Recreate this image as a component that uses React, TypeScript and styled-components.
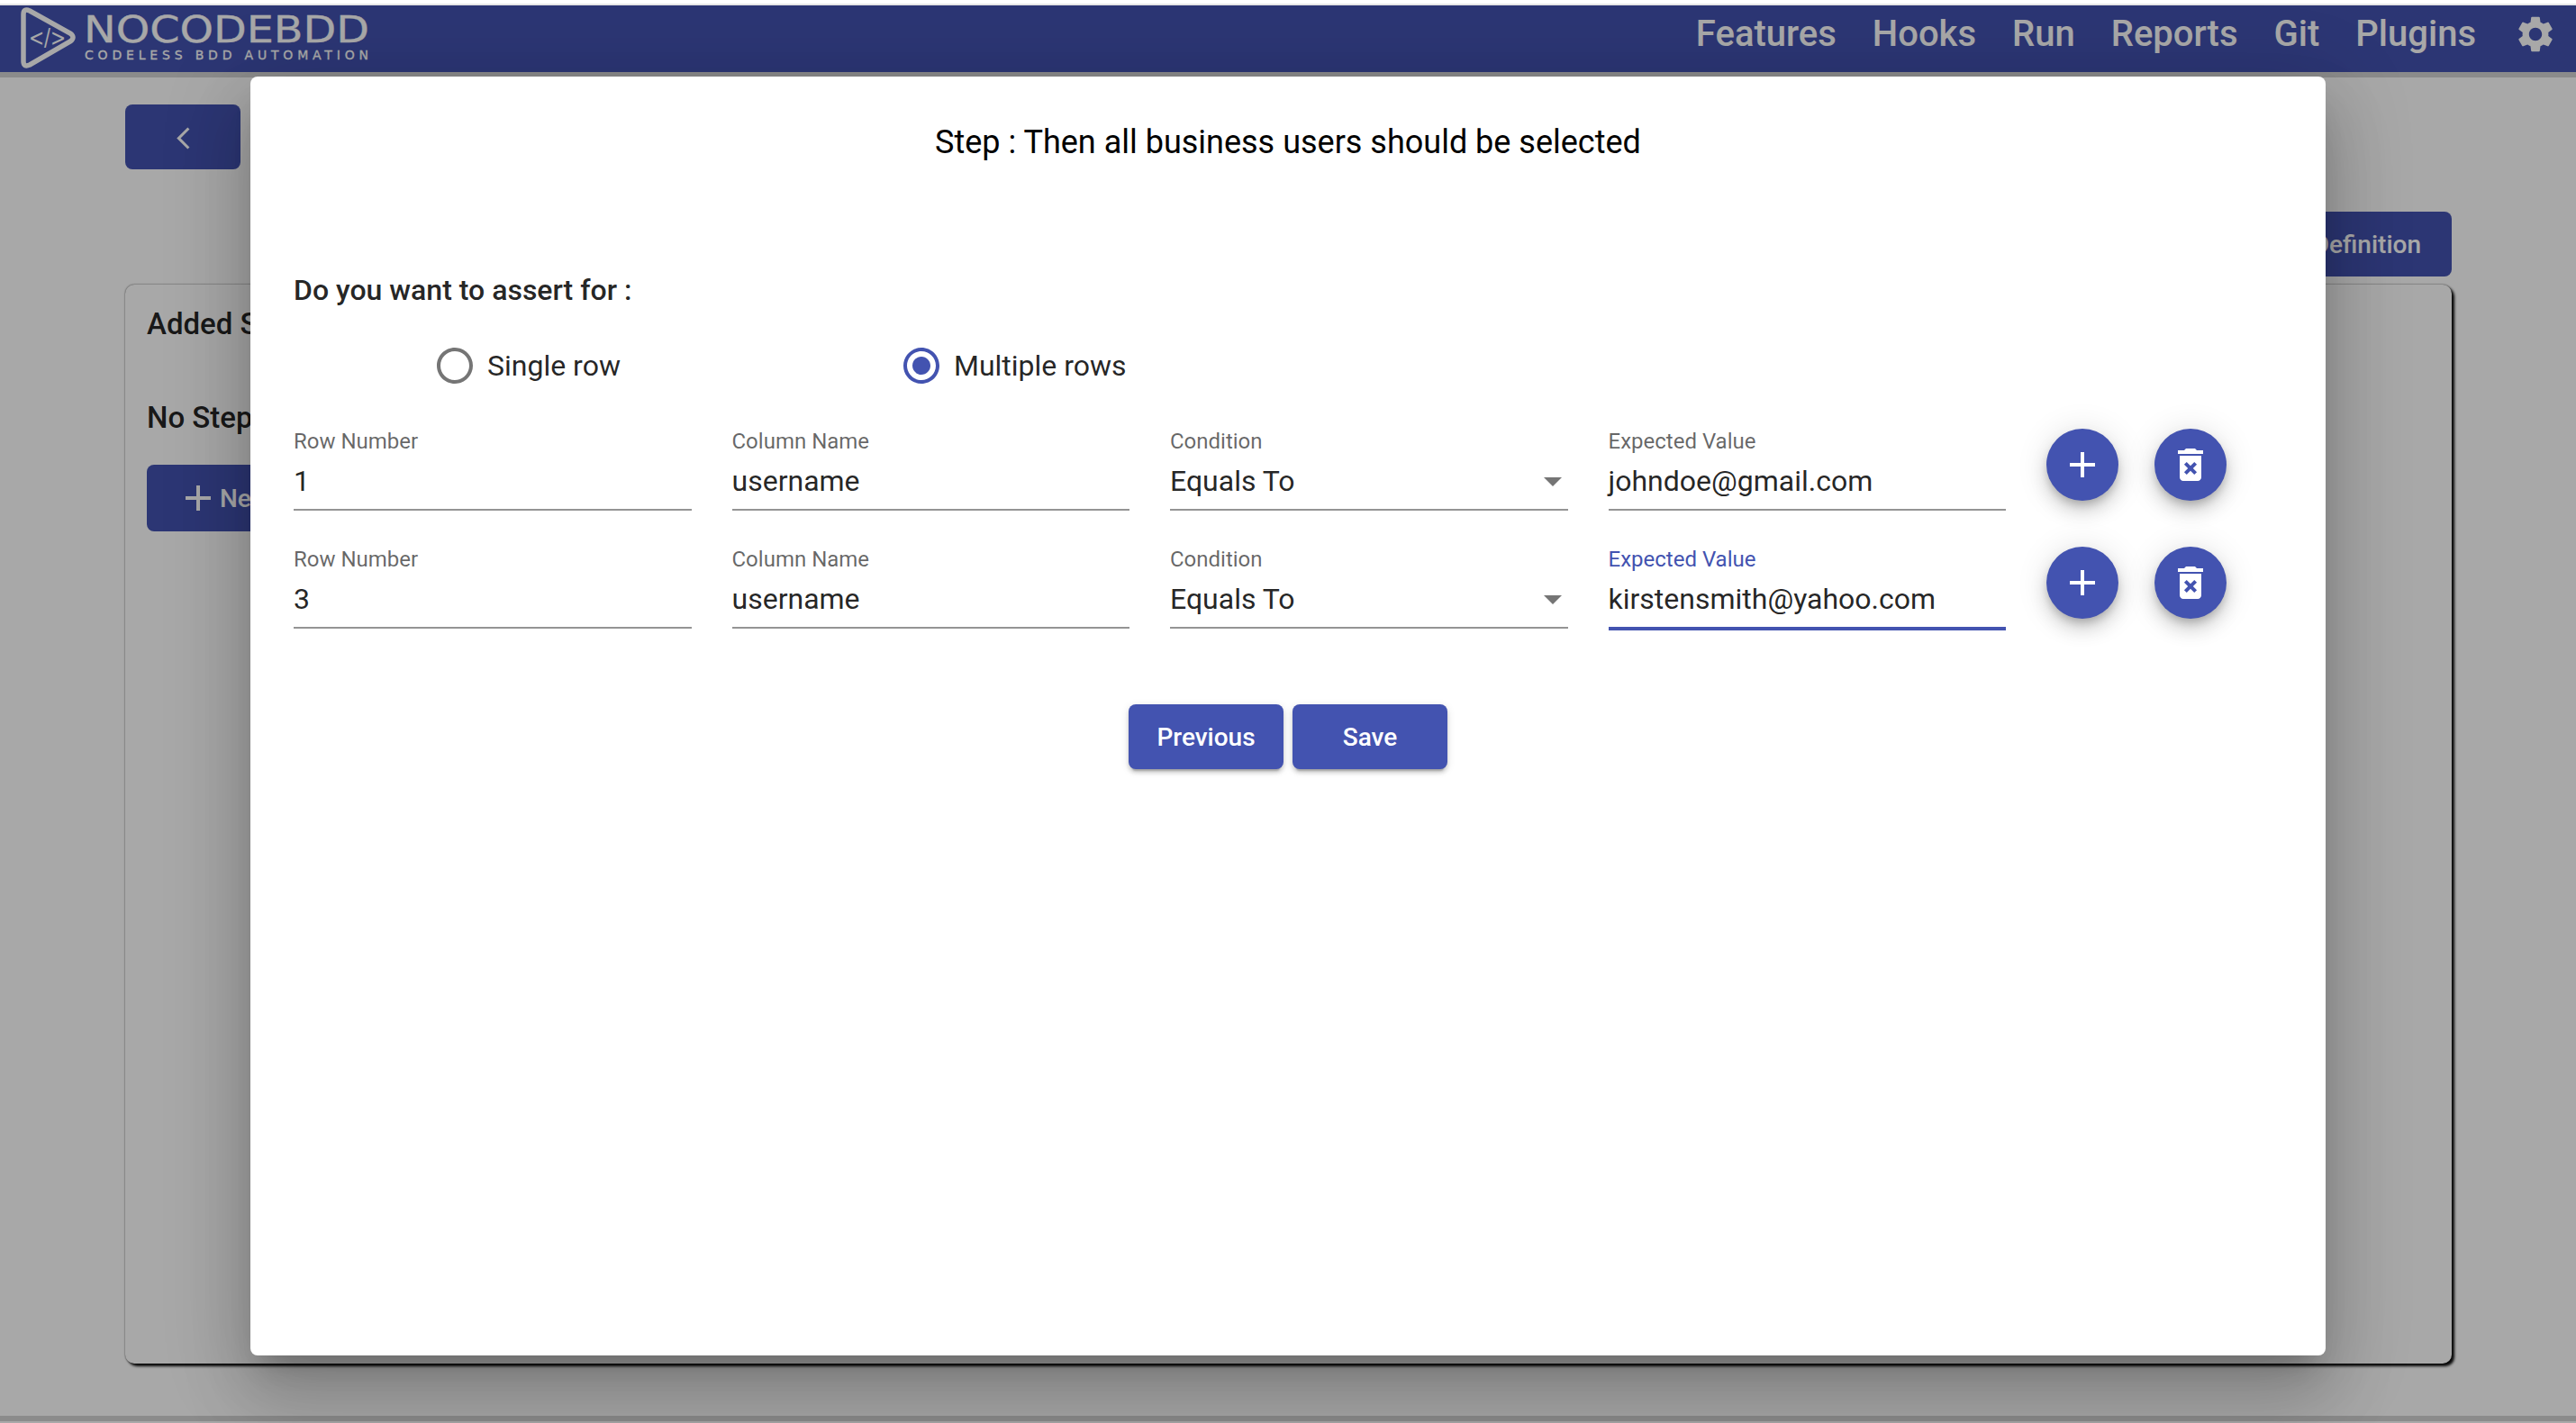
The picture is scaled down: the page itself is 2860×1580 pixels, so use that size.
import styled, { createGlobalStyle } from "styled-components";
import {
  MdAdd,
  MdArrowBackIosNew,
  MdArrowDropDown,
  MdDeleteForever,
  MdRadioButtonChecked,
  MdRadioButtonUnchecked,
  MdSettings,
} from "react-icons/md";

const primary = "#4353b0";
const navLinks = ["Features", "Hooks", "Run", "Reports", "Git", "Plugins"];

type FieldType = {
  label: string;
  value: string;
  select?: boolean;
  focused?: boolean;
};

const rows: FieldType[][] = [
  [
    { label: "Row Number", value: "1" },
    { label: "Column Name", value: "username" },
    { label: "Condition", value: "Equals To", select: true },
    { label: "Expected Value", value: "johndoe@gmail.com" },
  ],
  [
    { label: "Row Number", value: "3" },
    { label: "Column Name", value: "username" },
    { label: "Condition", value: "Equals To", select: true },
    { label: "Expected Value", value: "kirstensmith@yahoo.com", focused: true },
  ],
];

function Logo() {
  return (
    <LogoSvg viewBox="0 0 400 74" width="400" height="74">
      <path
        d="M6 10 Q6 3 13 6 L58 31 Q64 35.5 58 40 L13 66 Q6 69 6 62 Z"
        fill="none"
        stroke="#fff"
        strokeWidth="5.5"
      />
      <text x="12" y="45" fontSize="26" textLength="41" lengthAdjust="spacingAndGlyphs" fill="#fff">
        {"</>"}
      </text>
      <text
        x="73"
        y="41"
        fontSize="41"
        textLength="317"
        lengthAdjust="spacingAndGlyphs"
        fill="#fff"
        stroke="#fff"
        strokeWidth="0.3"
      >
        NOCODEBDD
      </text>
      <text
        x="74"
        y="60"
        fontSize="14"
        textLength="315"
        lengthAdjust="spacing"
        fill="#fff"
        stroke="#fff"
        strokeWidth="0.3"
      >
        CODELESS BDD AUTOMATION
      </text>
    </LogoSvg>
  );
}

function Field({ label, value, select, focused }: FieldType) {
  return (
    <FieldBox>
      <FieldLabel $focused={focused}>{label}</FieldLabel>
      <FieldInput $focused={focused}>
        <span>{value}</span>
        {select && <MdArrowDropDown size={48} color="rgba(0,0,0,0.54)" />}
      </FieldInput>
    </FieldBox>
  );
}

export default function App() {
  return (
    <Screen>
      <GlobalStyle />
      <TopStrip />
      <Viewport>
        <Nav>
          <Logo />
          <NavRight>
            <NavLinks>
              {navLinks.map((link) => (
                <span key={link}>{link}</span>
              ))}
            </NavLinks>
            <MdSettings size={48} />
          </NavRight>
        </Nav>

        <Page>
          <BackButton>
            <MdArrowBackIosNew size={29} />
          </BackButton>
          <PageActions>
            <DefinitionButton>Add Step Definition</DefinitionButton>
          </PageActions>
          <Card>
            <CardTitle>Added Steps</CardTitle>
            <CardTitle>No Steps Added</CardTitle>
            <NewStepButton>
              <MdAdd size={48} />
              New Step
            </NewStepButton>
          </Card>
        </Page>
        <FooterLine />

        <Backdrop />
        <Modal>
          <ModalTitle>Step : Then all business users should be selected</ModalTitle>
          <Question>Do you want to assert for :</Question>
          <RadioGroup>
            <RadioOption>
              <MdRadioButtonUnchecked size={48} color="rgba(0,0,0,0.54)" />
              Single row
            </RadioOption>
            <RadioOption>
              <MdRadioButtonChecked size={48} color={primary} />
              Multiple rows
            </RadioOption>
          </RadioGroup>
          <Rows>
            {rows.map((row, i) => (
              <FieldRow key={i}>
                {row.map((field) => (
                  <Field key={field.label} {...field} />
                ))}
                <RowActions>
                  <RoundButton>
                    <MdAdd size={48} />
                  </RoundButton>
                  <RoundButton>
                    <MdDeleteForever size={48} />
                  </RoundButton>
                </RowActions>
              </FieldRow>
            ))}
          </Rows>
          <ModalActions>
            <ActionButton>Previous</ActionButton>
            <ActionButton>Save</ActionButton>
          </ModalActions>
        </Modal>
      </Viewport>
    </Screen>
  );
}

const GlobalStyle = createGlobalStyle`
  html, body {
    margin: 0;
    padding: 0;
    background: #fff;
    font-family: Roboto, "Liberation Sans", sans-serif;
  }
  * {
    box-sizing: border-box;
  }
`;

const Screen = styled.div`
  width: 2860px;
  height: 1580px;
  overflow: hidden;
  display: flex;
  flex-direction: column;
  background: #fff;
`;

const TopStrip = styled.div`
  height: 6px;
  flex: none;
  border-bottom: 2px solid #e6e6e6;
`;

const Viewport = styled.div`
  position: relative;
  flex: 1;
  display: flex;
  flex-direction: column;
`;

const Nav = styled.header`
  flex: none;
  height: 80px;
  display: flex;
  align-items: center;
  justify-content: space-between;
  padding: 0 21px 0 20px;
  background: ${primary};
  border-bottom: 6px solid #d4d4d4;
  color: #fff;
`;

const LogoSvg = styled.svg`
  flex: none;
  font-family: "DejaVu Sans", sans-serif;
`;

const NavRight = styled.div`
  display: flex;
  align-items: center;
  gap: 42px;
  padding-bottom: 10px;
`;

const NavLinks = styled.nav`
  display: flex;
  gap: 40px;
  font-size: 40px;
  font-weight: 500;
  line-height: 48px;
`;

const Page = styled.main`
  flex: 1;
  display: flex;
  flex-direction: column;
  padding: 30px 138px 58px 139px;
`;

const SolidButton = styled.button`
  border: none;
  border-radius: 8px;
  background: ${primary};
  color: #fff;
  font-family: inherit;
  font-size: 28px;
  font-weight: 500;
  display: flex;
  align-items: center;
  justify-content: center;
`;

const BackButton = styled(SolidButton)`
  width: 128px;
  height: 72px;
  flex: none;
  padding: 2px 0 0;
`;

const PageActions = styled.div`
  display: flex;
  justify-content: flex-end;
  margin-top: 47px;
`;

const DefinitionButton = styled(SolidButton)`
  height: 72px;
  padding: 1px 34px 0;
`;

const Card = styled.section`
  flex: 1;
  margin-top: 9px;
  padding: 22px 24px;
  display: flex;
  flex-direction: column;
  align-items: flex-start;
  border-radius: 10px;
  background: #fff;
  box-shadow: 0 0 2px rgba(0, 0, 0, 0.7), 3px 3px 3px rgba(0, 0, 0, 0.95);
`;

const CardTitle = styled.div`
  font-size: 33px;
  font-weight: 500;
  line-height: 44px;
  margin-bottom: 60px;
  color: rgba(0, 0, 0, 0.87);
`;

const NewStepButton = styled(SolidButton)`
  height: 74px;
  width: 300px;
  margin-top: -30px;
  padding-left: 33px;
  justify-content: flex-start;
`;

const FooterLine = styled.div`
  flex: none;
  height: 6px;
  margin-bottom: 2px;
  background: #d4d4d4;
`;

const Backdrop = styled.div`
  position: absolute;
  inset: 0;
  background: rgba(0, 0, 0, 0.34);
`;

const Modal = styled.div`
  position: absolute;
  left: 278px;
  top: 79px;
  width: 2304px;
  height: 1420px;
  padding: 51px 48px;
  border-radius: 8px;
  background: #fff;
  color: rgba(0, 0, 0, 0.87);
  box-shadow: 0 22px 30px -14px rgba(0, 0, 0, 0.2),
    0 48px 76px 6px rgba(0, 0, 0, 0.14), 0 18px 92px 16px rgba(0, 0, 0, 0.12);
`;

const ModalTitle = styled.h2`
  margin: 0;
  color: #000;
  font-size: 36px;
  font-weight: 400;
  line-height: 44px;
  text-align: center;
`;

const Question = styled.div`
  margin-top: 120px;
  font-size: 32px;
  font-weight: 500;
  line-height: 44px;
`;

const RadioGroup = styled.div`
  display: flex;
  height: 48px;
  margin-top: 38px;
  padding-left: 155px;
`;

const RadioOption = styled.label`
  width: 518px;
  display: flex;
  align-items: center;
  gap: 12px;
  font-size: 32px;
  line-height: 48px;
`;

const Rows = styled.div`
  margin-top: 45px;
  display: flex;
  flex-direction: column;
  gap: 39px;
`;

const FieldRow = styled.div`
  display: grid;
  grid-template-columns: repeat(4, 441.5px) auto;
  column-gap: 45px;
  align-items: start;
`;

const FieldBox = styled.div`
  display: flex;
  flex-direction: column;
`;

const FieldLabel = styled.label<{ $focused?: boolean }>`
  font-size: 24px;
  line-height: 28px;
  padding-top: 1px;
  height: 28px;
  color: ${({ $focused }) => ($focused ? primary : "rgba(0, 0, 0, 0.6)")};
`;

const FieldInput = styled.div<{ $focused?: boolean }>`
  height: ${({ $focused }) => ($focused ? 66 : 64)}px;
  padding-top: 12px;
  display: flex;
  justify-content: space-between;
  font-size: 32px;
  line-height: 38px;
  border-bottom: ${({ $focused }) =>
    $focused ? `4px solid ${primary}` : "2px solid rgba(0, 0, 0, 0.42)"};

  svg {
    flex: none;
    margin: -5px -7px 0 0;
  }
`;

const RowActions = styled.div`
  display: flex;
  gap: 40px;
  margin-top: 1px;
`;

const RoundButton = styled.button`
  width: 80px;
  height: 80px;
  padding: 0;
  border: none;
  border-radius: 50%;
  display: flex;
  align-items: center;
  justify-content: center;
  background: ${primary};
  color: #fff;
  box-shadow: 0 6px 10px -2px rgba(0, 0, 0, 0.2), 0 12px 20px 0 rgba(0, 0, 0, 0.14),
    0 2px 36px 0 rgba(0, 0, 0, 0.12);
`;

const ModalActions = styled.div`
  margin-top: 82px;
  display: flex;
  justify-content: center;
  gap: 10px;
`;

const ActionButton = styled(SolidButton)`
  width: 172px;
  height: 72px;
  box-shadow: 0 6px 2px -4px rgba(0, 0, 0, 0.2), 0 4px 4px 0 rgba(0, 0, 0, 0.14),
    0 2px 10px 0 rgba(0, 0, 0, 0.12);
`;
